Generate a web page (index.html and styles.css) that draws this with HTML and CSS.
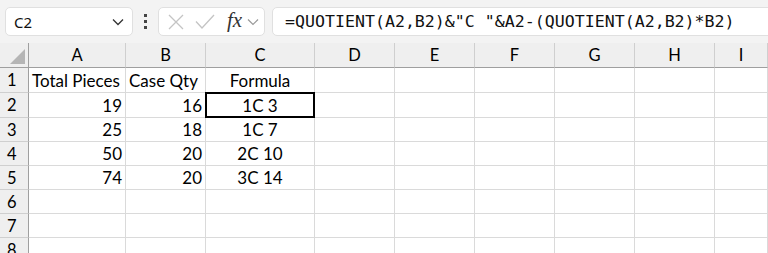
FILE: index.html
```html
<!DOCTYPE html>
<html>
    <head>
        <title>Quotient sheet</title>
        <link rel="stylesheet" href="styles.css">
    </head>
    <body>
        <div class="toolbar">
            <div class="nameBox">
                <span>C2</span>
                <svg class="chev" width="12" height="8" viewBox="0 0 12 8"><path d="M1 1.5 L6 6.5 L11 1.5" fill="none" stroke="#333" stroke-width="1.3"/></svg>
            </div>
            <div class="dots"><i></i><i></i><i></i></div>
            <div class="fxBox">
                <svg width="16" height="16" viewBox="0 0 16 16"><path d="M1 1 L15 15 M15 1 L1 15" stroke="#c4c4c4" stroke-width="1.3" fill="none"/></svg>
                <svg width="20" height="16" viewBox="0 0 20 16"><path d="M1 7.5 L7 14 L19 1" stroke="#c4c4c4" stroke-width="1.3" fill="none"/></svg>
                <span class="fx">fx</span>
                <svg width="12" height="8" viewBox="0 0 12 8"><path d="M1 1.5 L6 6.5 L11 1.5" fill="none" stroke="#999" stroke-width="1.2"/></svg>
            </div>
            <div class="formula">=QUOTIENT(A2,B2)&amp;"C "&amp;A2-(QUOTIENT(A2,B2)*B2)</div>
        </div>
        <div class="sheet">
            <div class="hd corner"><b></b></div>
            <div class="hd col">A</div>
            <div class="hd col">B</div>
            <div class="hd col">C</div>
            <div class="hd col">D</div>
            <div class="hd col">E</div>
            <div class="hd col">F</div>
            <div class="hd col">G</div>
            <div class="hd col">H</div>
            <div class="hd col">I</div>

            <div class="hd row">1</div>
            <div class="c">Total Pieces</div><div class="c">Case Qty</div><div class="c mid">Formula</div>
            <div class="c"></div><div class="c"></div><div class="c"></div><div class="c"></div><div class="c"></div><div class="c"></div>

            <div class="hd row">2</div>
            <div class="c num">19</div><div class="c num">16</div><div class="c mid sel">1C 3</div>
            <div class="c"></div><div class="c"></div><div class="c"></div><div class="c"></div><div class="c"></div><div class="c"></div>

            <div class="hd row">3</div>
            <div class="c num">25</div><div class="c num">18</div><div class="c mid">1C 7</div>
            <div class="c"></div><div class="c"></div><div class="c"></div><div class="c"></div><div class="c"></div><div class="c"></div>

            <div class="hd row">4</div>
            <div class="c num">50</div><div class="c num">20</div><div class="c mid">2C 10</div>
            <div class="c"></div><div class="c"></div><div class="c"></div><div class="c"></div><div class="c"></div><div class="c"></div>

            <div class="hd row">5</div>
            <div class="c num">74</div><div class="c num">20</div><div class="c mid">3C 14</div>
            <div class="c"></div><div class="c"></div><div class="c"></div><div class="c"></div><div class="c"></div><div class="c"></div>

            <div class="hd row">6</div>
            <div class="c"></div><div class="c"></div><div class="c"></div>
            <div class="c"></div><div class="c"></div><div class="c"></div><div class="c"></div><div class="c"></div><div class="c"></div>

            <div class="hd row">7</div>
            <div class="c"></div><div class="c"></div><div class="c"></div>
            <div class="c"></div><div class="c"></div><div class="c"></div><div class="c"></div><div class="c"></div><div class="c"></div>

            <div class="hd row">8</div>
            <div class="c"></div><div class="c"></div><div class="c"></div>
            <div class="c"></div><div class="c"></div><div class="c"></div><div class="c"></div><div class="c"></div><div class="c"></div>
        </div>
    </body>
</html>
```

FILE: styles.css
```css
html, body {
    margin: 0;
    overflow: hidden;
}

body {
    background-color: #fff;
    font-family: Lato, "Liberation Sans", sans-serif;
    color: #000;
}

.toolbar {
    display: flex;
    align-items: center;
    height: 43px;
    background-color: #f3f3f3;
    padding-left: 5px;
    box-sizing: border-box;
}

.nameBox,
.fxBox,
.formula {
    height: 29px;
    box-sizing: border-box;
    background-color: #fff;
    border: 1px solid #e0e0e0;
    border-radius: 5px;
    display: flex;
    align-items: center;
}

.nameBox {
    width: 128px;
    padding: 0 8px 0 8px;
    justify-content: space-between;
    font-family: "Noto Sans", "Open Sans", sans-serif;
    font-size: 15px;
    color: #111;
}

.dots {
    width: 25px;
    display: flex;
    flex-direction: column;
    align-items: center;
    gap: 3px;
}

.dots i {
    display: block;
    width: 3px;
    height: 3px;
    background-color: #444;
}

.fxBox {
    width: 107px;
    padding: 0 4px 0 9px;
    gap: 9px;
}

.fxBox svg:nth-child(2) {
    margin-left: 2px;
}

.fx {
    font-family: "Liberation Serif", "DejaVu Serif", serif;
    font-style: italic;
    font-size: 21px;
    color: #333;
    margin-left: 3px;
    margin-right: -4px;
    position: relative;
    top: -1px;
}

.formula {
    flex: 1;
    margin-left: 7px;
    margin-right: -10px;
    padding-left: 12px;
    font-family: "DejaVu Sans Mono", monospace;
    font-size: 16.6px;
    color: #111;
    white-space: nowrap;
    overflow: hidden;
}

.sheet {
    display: grid;
    grid-template-columns: 29px 97px 80px 109px 80px 80px 80px 80px 80px 1fr;
    grid-template-rows: 25px 25px 25px 24px 24px 24px 24px 24px 24px;
    font-size: 17px;
}

.sheet > div {
    box-sizing: border-box;
    border-right: 1px solid #dadada;
    border-bottom: 1px solid #dadada;
    display: flex;
    align-items: center;
    white-space: nowrap;
    padding: 0 3px;
}

.hd {
    background-color: #efefef;
    font-size: 16.5px;
}

.hd.col {
    justify-content: center;
    border-bottom: 1px solid #9f9f9f !important;
    border-right-color: #cfcfcf !important;
}

.hd.corner {
    border-bottom: 1px solid #9f9f9f !important;
    border-right: 1px solid #9f9f9f !important;
    position: relative;
}

.hd.corner b {
    position: absolute;
    right: 3px;
    bottom: 3px;
    width: 0;
    height: 0;
    border-left: 15px solid transparent;
    border-bottom: 15px solid #b5b5b5;
}

.hd.row {
    border-right: 1px solid #9f9f9f !important;
    border-bottom-color: #cfcfcf !important;
    padding-left: 7px;
}

.c.num {
    justify-content: flex-end;
}

.c.mid {
    justify-content: center;
}

.sel {
    position: relative;
}

.sel::after {
    content: "";
    position: absolute;
    top: -1px;
    left: -1px;
    right: -1px;
    bottom: -1px;
    border: 2px solid #000;
}
```
